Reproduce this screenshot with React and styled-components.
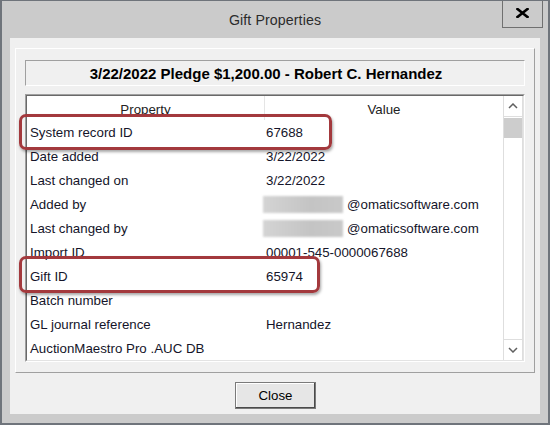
import React from "react";
import styled, { createGlobalStyle } from "styled-components";

const Global = createGlobalStyle`
  html, body { margin: 0; padding: 0; background: #cbcbcb; }
  * { box-sizing: border-box; }
  body { font-family: "Liberation Sans", Arial, sans-serif; }
`;

const Window = styled.div`
  position: relative;
  width: 550px;
  height: 425px;
  background: #cbcbcb;
  border: 2px solid #6f747b;
  border-top-width: 1px;
  display: flex;
  flex-direction: column;
  overflow: hidden;
`;

const TitleBar = styled.div`
  height: 37px;
  flex: none;
  display: grid;
  grid-template-columns: 1fr auto 1fr;
  align-items: start;
`;

const Title = styled.div`
  grid-column: 2;
  padding-top: 11px;
  font-size: 14.2px;
  color: #2b2b2b;
  letter-spacing: 0.1px;
`;

const CloseX = styled.div`
  grid-column: 3;
  justify-self: end;
  margin-top: -1px;
  margin-right: 5px;
  width: 41px;
  height: 28px;
  border: 1px solid #707070;
  border-top: none;
  display: flex;
  align-items: center;
  justify-content: center;
  padding-bottom: 1px;
`;

const Client = styled.div`
  flex: 1;
  margin: 0 8px 9px 8px;
  background: #f0f0f0;
  padding: 10px 5px 5px 5px;
  display: flex;
  flex-direction: column;
`;

const Panel = styled.div`
  height: 325px;
  flex: none;
  border: 1px solid;
  border-color: #ffffff #a0a0a0 #a0a0a0 #ffffff;
  padding: 11px 9px 13px 9px;
  display: flex;
  flex-direction: column;
  gap: 8px;
`;

const Caption = styled.div`
  height: 26px;
  flex: none;
  border: 1px solid;
  border-color: #a0a0a0 #ffffff #ffffff #a0a0a0;
  display: flex;
  align-items: center;
  justify-content: center;
  font-weight: bold;
  font-size: 15px;
  color: #000;
  padding: 1px 18px 0 0;
`;

const ListOuter = styled.div`
  flex: 1;
  border: 1px solid;
  border-color: #a0a0a0 #ffffff #ffffff #a0a0a0;
  display: flex;
`;

const ListInner = styled.div`
  flex: 1;
  border: 1px solid;
  border-color: #696969 #e3e3e3 #e3e3e3 #696969;
  background: #fff;
  display: grid;
  grid-template-columns: 1fr 20px;
  overflow: hidden;
`;

const Table = styled.div`
  overflow: hidden;
  display: grid;
  grid-template-columns: 238px 1fr;
  grid-auto-rows: 24px;
  font-size: 13.3px;
  color: #15152a;
`;

const HeadCell = styled.div`
  display: flex;
  align-items: center;
  justify-content: center;
  color: #222;
  padding-top: 2px;
  border-right: ${(p) => (p.$sep ? "1px solid #e5e5e5" : "none")};
`;

const Cell = styled.div`
  display: flex;
  align-items: center;
  white-space: nowrap;
  padding-left: ${(p) => (p.$value ? "1px" : "3px")};
`;

const Blur = styled.span`
  display: inline-block;
  width: 80px;
  height: 17px;
  margin-left: -3px;
  margin-right: 4px;
  background: linear-gradient(90deg, #d4d4d4, #c4c4c4 60%, #c9c9c9);
  filter: blur(1.2px);
`;

const Scrollbar = styled.div`
  display: flex;
  flex-direction: column;
  background: #fff;
  border-left: 1px solid #dedede;
  border-right: 1px solid #dedede;
`;

const ArrowBtn = styled.div`
  height: 21px;
  flex: none;
  display: flex;
  align-items: center;
  justify-content: center;
  border-top: ${(p) => (p.$down ? "1px solid #dedede" : "none")};
  border-bottom: ${(p) => (p.$down ? "none" : "1px solid #dedede")};
`;

const Thumb = styled.div`
  height: 20px;
  flex: none;
  margin: 1px 0 0 0;
  background: #cdcdcd;
`;

const Track = styled.div`
  flex: 1;
`;

const ButtonRow = styled.div`
  flex: 1;
  display: flex;
  justify-content: center;
  align-items: flex-start;
  padding-top: 9px;
`;

const Button = styled.button`
  width: 81px;
  height: 27px;
  margin-left: 1px;
  background: #e6e6e6;
  border: 1px solid #7a7a7a;
  box-shadow: inset -1px -1px 0 #4a4a4a, inset 1px 1px 0 #ffffff;
  font-family: "Liberation Sans", Arial, sans-serif;
  font-size: 13.3px;
  color: #000;
  padding: 0 0 1px 0;
`;

const Highlight = styled.div`
  position: absolute;
  left: ${(p) => p.$x}px;
  top: ${(p) => p.$y}px;
  width: ${(p) => p.$w}px;
  height: ${(p) => p.$h}px;
  border: 3px solid #a3393d;
  border-radius: 7px;
  box-shadow: 1px 2px 3px rgba(0, 0, 0, 0.35);
  pointer-events: none;
`;

const Chevron = ({ down }) => (
  <svg width="10" height="6" viewBox="0 0 10 6">
    <polyline
      points={down ? "1,1 5,5 9,1" : "1,5 5,1 9,5"}
      fill="none"
      stroke="#606060"
      strokeWidth="1.5"
    />
  </svg>
);

const rows = [
  ["System record ID", "67688"],
  ["Date added", "3/22/2022"],
  ["Last changed on", "3/22/2022"],
  ["Added by", "@omaticsoftware.com", true],
  ["Last changed by", "@omaticsoftware.com", true],
  ["Import ID", "00001-545-0000067688"],
  ["Gift ID", "65974"],
  ["Batch number", ""],
  ["GL journal reference", "Hernandez"],
  ["AuctionMaestro Pro .AUC DB", ""],
];

export default function App() {
  return (
    <>
      <Global />
      <Window>
        <TitleBar>
          <Title>Gift Properties</Title>
          <CloseX>
            <svg width="13" height="10" viewBox="0 0 13 10">
              <path d="M1.5 1 L11.5 9 M11.5 1 L1.5 9" stroke="#000" strokeWidth="2.6" strokeLinecap="square" />
            </svg>
          </CloseX>
        </TitleBar>
        <Client>
          <Panel>
            <Caption>3/22/2022 Pledge $1,200.00 - Robert C. Hernandez</Caption>
            <ListOuter>
              <ListInner>
                <Table>
                  <HeadCell $sep>Property</HeadCell>
                  <HeadCell>Value</HeadCell>
                  {rows.map(([k, v, blur]) => (
                    <React.Fragment key={k}>
                      <Cell>{k}</Cell>
                      <Cell $value>
                        {blur && <Blur />}
                        {v}
                      </Cell>
                    </React.Fragment>
                  ))}
                </Table>
                <Scrollbar>
                  <ArrowBtn>
                    <Chevron />
                  </ArrowBtn>
                  <Thumb />
                  <Track />
                  <ArrowBtn $down>
                    <Chevron down />
                  </ArrowBtn>
                </Scrollbar>
              </ListInner>
            </ListOuter>
          </Panel>
          <ButtonRow>
            <Button>Close</Button>
          </ButtonRow>
        </Client>
        <Highlight $x={17} $y={113} $w={313} $h={36} />
        <Highlight $x={17} $y={255} $w={301} $h={37} />
      </Window>
    </>
  );
}
